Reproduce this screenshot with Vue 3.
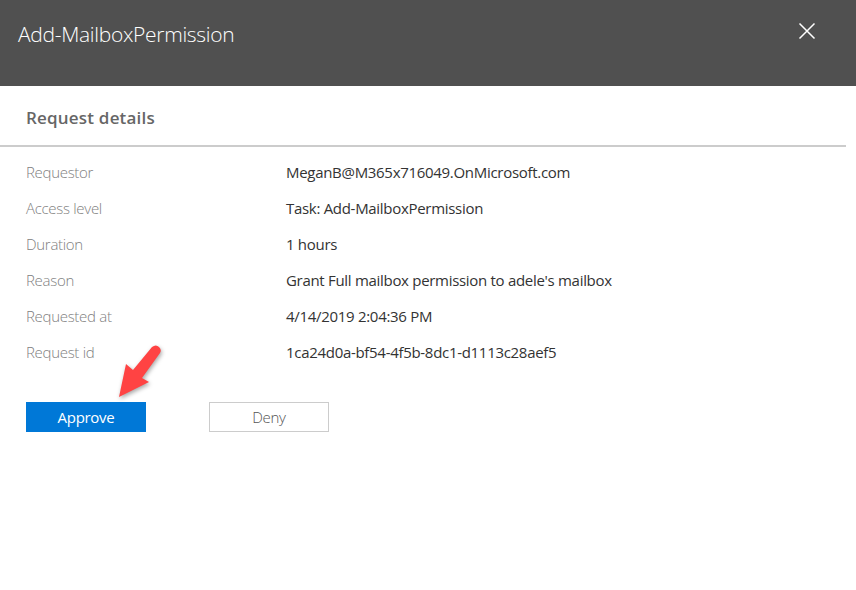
<script setup>
const details = [
  { label: 'Requestor', value: 'MeganB@M365x716049.OnMicrosoft.com' },
  { label: 'Access level', value: 'Task: Add-MailboxPermission' },
  { label: 'Duration', value: '1 hours' },
  { label: 'Reason', value: "Grant Full mailbox permission to adele's mailbox" },
  { label: 'Requested at', value: '4/14/2019 2:04:36 PM' },
  { label: 'Request id', value: '1ca24d0a-bf54-4f5b-8dc1-d1113c28aef5' },
]
</script>

<template>
  <div class="panel">
    <header class="panel-header">
      <h1 class="panel-title">Add-MailboxPermission</h1>
      <button class="close-btn" aria-label="Close">
        <svg width="18" height="18" viewBox="0 0 18 18">
          <path d="M1.5 1.5 L16.5 16.5 M16.5 1.5 L1.5 16.5" stroke="#fff" stroke-width="1.5" fill="none" />
        </svg>
      </button>
    </header>

    <section class="details">
      <h2 class="details-title">Request details</h2>
      <div class="details-list">
        <div v-for="row in details" :key="row.label" class="details-row">
          <span class="row-label">{{ row.label }}</span>
          <span class="row-value">{{ row.value }}</span>
        </div>
      </div>

      <div class="actions">
        <button class="btn btn-primary">Approve</button>
        <button class="btn btn-default">Deny</button>
        <svg class="arrow" width="60" height="70" viewBox="0 0 60 70">
          <path
            d="M13 55 L20 22 L27 28 L46 5 Q50 2 53 5 Q56 8 54 11 L36 36 L43 40 Z"
            fill="#ff4343"
          />
        </svg>
      </div>
    </section>
  </div>
</template>

<style scoped>
  .panel {
    width: 856px;
    height: 590px;
    background: #fff;
    overflow: hidden;
    font-family: 'Open Sans', 'Noto Sans', sans-serif;
  }

  .panel-header {
    height: 86px;
    box-sizing: border-box;
    background: #505050;
    padding: 18px 40px 0 18px;
    display: flex;
    justify-content: space-between;
    align-items: flex-start;
  }

  .panel-title {
    margin: 0;
    font-size: 21px;
    line-height: 32px;
    font-weight: 300;
    letter-spacing: -0.3px;
    color: #fff;
  }

  .close-btn {
    margin-top: 4px;
    padding: 0;
    border: 0;
    background: none;
    display: flex;
  }

  .details {
    padding-top: 18px;
  }

  .details-title {
    margin: 0 10px 0 0;
    padding: 1px 0 15px 26px;
    font-size: 17px;
    line-height: 25px;
    font-weight: 600;
    letter-spacing: 0.2px;
    color: #666;
    border-bottom: 2px solid #ccc;
  }

  .details-list {
    padding: 7px 0 0 26px;
  }

  .details-row {
    display: grid;
    grid-template-columns: 260px 1fr;
    height: 36px;
    align-items: center;
    font-size: 15px;
    letter-spacing: -0.3px;
  }

  .row-label {
    color: #808080;
    font-weight: 300;
  }

  .row-value {
    color: #333;
  }

  .actions {
    position: relative;
    display: flex;
    gap: 63px;
    margin: 32px 0 0 26px;
  }

  .btn {
    width: 120px;
    height: 30px;
    box-sizing: border-box;
    font-family: inherit;
    font-size: 15px;
    letter-spacing: -0.3px;
    padding: 0;
  }

  .btn-primary {
    border: 0;
    background: #0078d7;
    color: #fff;
  }

  .btn-default {
    border: 1px solid #ccc;
    background: #fff;
    color: #555;
    font-weight: 300;
  }

  .arrow {
    position: absolute;
    left: 80px;
    top: -60px;
    filter: drop-shadow(1px 2px 2px rgba(0, 0, 0, 0.35));
  }
</style>

<style>
  body {
    margin: 0;
    background: #fff;
  }
</style>
